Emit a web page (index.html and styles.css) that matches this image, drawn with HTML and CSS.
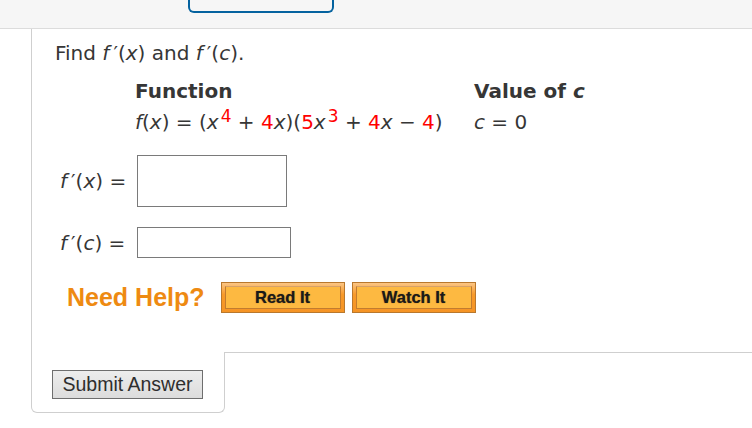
FILE: index.html
```html
<!DOCTYPE html>
<html>
<head>
<meta charset="utf-8">
<link rel="stylesheet" href="styles.css">
</head>
<body>
<div class="topbar"><div class="tab-btn"></div></div>
<div class="panel">
  <div class="question">
    <p class="prompt">Find <i>f</i>&thinsp;′(<i>x</i>) and <i>f</i>&thinsp;′(<i>c</i>).</p>
    <div class="ftable">
      <div class="th">Function</div>
      <div class="th">Value of <i>c</i></div>
      <div class="td"><i>f</i>(<i>x</i>) = (<i>x</i><sup class="red">4</sup> + <span class="red">4</span><i>x</i>)(<span class="red">5</span><i>x</i><sup class="red">3</sup> + <span class="red">4</span><i>x</i> − <span class="red">4</span>)</div>
      <div class="td"><i>c</i> = 0</div>
    </div>
    <div class="answer-row big">
      <span class="alabel"><i>f</i>&thinsp;′(<i>x</i>) =</span>
      <span class="abox box1"></span>
    </div>
    <div class="answer-row small">
      <span class="alabel"><i>f</i>&thinsp;′(<i>c</i>) =</span>
      <span class="abox box2"></span>
    </div>
    <div class="help-row">
      <span class="need">Need Help?</span>
      <span class="hbtn"><span class="hbtn-in">Read It</span></span>
      <span class="hbtn"><span class="hbtn-in">Watch It</span></span>
    </div>
  </div>
  <div class="submit-row">
    <div class="submit-box"><button class="submit">Submit Answer</button></div>
    <div class="rest"></div>
  </div>
</div>
</body>
</html>
```

FILE: styles.css
```css
html, body {
  margin: 0;
  padding: 0;
  background: #fff;
}
body {
  font-family: "DejaVu Sans", Verdana, sans-serif;
  color: #363636;
  width: 752px;
  height: 428px;
  overflow: hidden;
}
.topbar {
  height: 28px;
  background: #f6f6f6;
  border-bottom: 1px solid #dcdcdc;
}
.tab-btn {
  margin-left: 188px;
  width: 142px;
  height: 11px;
  border: 2px solid #04629f;
  border-top: none;
  border-radius: 0 0 6px 6px;
}
.panel {
  margin-left: 31px;
}
.question {
  border-left: 1px solid #cfcfcf;
  padding: 12px 0 0 23px;
  height: 311px;
  box-sizing: content-box;
}
.prompt {
  margin: 0;
  font-size: 20px;
  line-height: 24px;
}
i { font-style: italic; }
.red { color: #ff0000; }
.ftable {
  display: grid;
  grid-template-columns: 339px auto;
  margin: 14px 0 0 80px;
  font-size: 20px;
  row-gap: 7px;
}
.th {
  font-weight: bold;
  line-height: 24px;
}
.td {
  line-height: 24px;
}
sup {
  font-size: 17px;
  line-height: 0;
  vertical-align: 7px;
  margin-left: 2px;
}
.answer-row {
  display: flex;
  align-items: center;
}
.answer-row.big { margin-top: 21px; }
.answer-row.small { margin-top: 20px; }
.alabel {
  width: 82px;
  padding-left: 5px;
  box-sizing: border-box;
  font-size: 20px;
  white-space: nowrap;
}
.abox {
  display: block;
  border: 1px solid #7a7a7a;
  background: #fff;
}
.box1 { width: 148px; height: 50px; }
.box2 { width: 152px; height: 29px; }
.help-row {
  display: flex;
  align-items: center;
  margin-top: 24px;
  margin-left: 12px;
}
.need {
  font-family: "Liberation Sans", Arial, sans-serif;
  font-weight: bold;
  font-size: 25px;
  color: #ee8a12;
  margin-right: 16px;
}
.hbtn {
  display: block;
  width: 124px;
  height: 31px;
  box-sizing: border-box;
  border: 1px solid #b9782d;
  background: linear-gradient(#fbc584, #f89a2a 40%, #f59425);
  padding: 3px;
  margin-right: 7px;
}
.hbtn-in {
  display: flex;
  align-items: center;
  justify-content: center;
  height: 100%;
  box-sizing: border-box;
  border: 1px solid #c27c2f;
  border-top-color: #d6a169;
  background: #fdb941;
  font-family: "Liberation Sans", Arial, sans-serif;
  font-weight: bold;
  font-size: 16.5px;
  color: #1a1a1a;
  text-shadow: 0 0 1px #6b4a1a;
}
.submit-row {
  display: flex;
}
.submit-box {
  width: 194px;
  height: 61px;
  border: 1px solid #cfcfcf;
  border-top: none;
  border-radius: 0 0 6px 6px;
  padding: 18px 0 0 20px;
  box-sizing: border-box;
}
.rest {
  flex: 1;
  border-top: 1px solid #cfcfcf;
}
.submit {
  display: block;
  width: 151px;
  height: 29px;
  margin: 0;
  padding: 0;
  border: 1px solid #6e6e6e;
  border-radius: 0;
  background: linear-gradient(#ededed, #dcdcdc);
  font-family: "Liberation Sans", Arial, sans-serif;
  font-size: 19.5px;
  color: #2e2e2e;
}
```
